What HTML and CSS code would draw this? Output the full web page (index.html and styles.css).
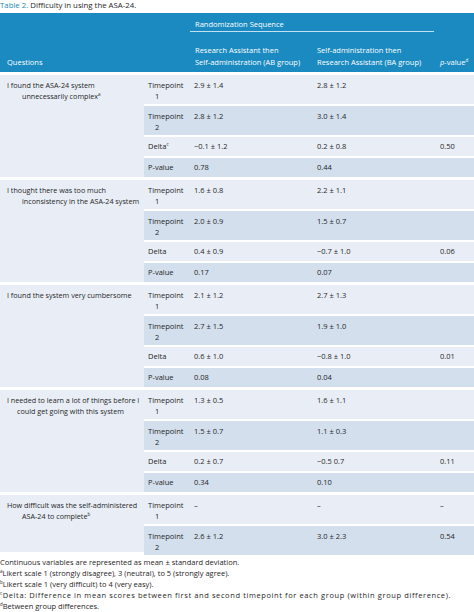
FILE: index.html
```html
<!DOCTYPE html>
<html>
<head>
<meta charset="utf-8">
<link rel="stylesheet" href="styles.css">
</head>
<body>
<p class="caption"><span class="tlabel">Table 2.</span> Difficulty in using the ASA-24.</p>
<table class="data">
  <colgroup>
    <col class="c-q"><col class="c-lab"><col class="c-ab"><col class="c-ba"><col class="c-p">
  </colgroup>
  <thead>
    <tr class="h1">
      <th rowspan="2" class="hq">Questions</th>
      <th rowspan="2" class="hlab"></th>
      <th colspan="2" class="hgroup"><div class="hgroup-line">Randomization Sequence</div></th>
      <th rowspan="2" class="hp"><i>p</i>-value<sup>d</sup></th>
    </tr>
    <tr class="h2">
      <th class="hab">Research Assistant then<br>Self-administration (AB group)</th>
      <th class="hba">Self-administration then<br>Research Assistant (BA group)</th>
    </tr>
  </thead>
  <tbody>
    <tr class="two light">
      <td rowspan="4" class="q"><span class="l1">I found the ASA-24 system</span><span class="l2">unnecessarily complex<sup>a</sup></span></td>
      <td class="lab">Timepoint<br><span class="ind">1</span></td><td>2.9 ± 1.4</td><td>2.8 ± 1.2</td><td></td>
    </tr>
    <tr class="two dark"><td class="lab">Timepoint<br><span class="ind">2</span></td><td>2.8 ± 1.2</td><td>3.0 ± 1.4</td><td></td></tr>
    <tr class="one light"><td class="lab">Delta<sup>c</sup></td><td>−0.1 ± 1.2</td><td>0.2 ± 0.8</td><td>0.50</td></tr>
    <tr class="one dark end"><td class="lab">P-value</td><td>0.78</td><td>0.44</td><td></td></tr>

    <tr class="two light">
      <td rowspan="4" class="q"><span class="l1">I thought there was too much</span><span class="l2">inconsistency in the ASA-24 system</span></td>
      <td class="lab">Timepoint<br><span class="ind">1</span></td><td>1.6 ± 0.8</td><td>2.2 ± 1.1</td><td></td>
    </tr>
    <tr class="two dark"><td class="lab">Timepoint<br><span class="ind">2</span></td><td>2.0 ± 0.9</td><td>1.5 ± 0.7</td><td></td></tr>
    <tr class="one light"><td class="lab">Delta</td><td>0.4 ± 0.9</td><td>−0.7 ± 1.0</td><td>0.06</td></tr>
    <tr class="one dark end"><td class="lab">P-value</td><td>0.17</td><td>0.07</td><td></td></tr>

    <tr class="two light">
      <td rowspan="4" class="q"><span class="l1">I found the system very cumbersome</span></td>
      <td class="lab">Timepoint<br><span class="ind">1</span></td><td>2.1 ± 1.2</td><td>2.7 ± 1.3</td><td></td>
    </tr>
    <tr class="two dark"><td class="lab">Timepoint<br><span class="ind">2</span></td><td>2.7 ± 1.5</td><td>1.9 ± 1.0</td><td></td></tr>
    <tr class="one light"><td class="lab">Delta</td><td>0.6 ± 1.0</td><td>−0.8 ± 1.0</td><td>0.01</td></tr>
    <tr class="one dark end"><td class="lab">P-value</td><td>0.08</td><td>0.04</td><td></td></tr>

    <tr class="two light">
      <td rowspan="4" class="q"><span class="l1">I needed to learn a lot of things before I</span><span class="l2 short">could get going with this system</span></td>
      <td class="lab">Timepoint<br><span class="ind">1</span></td><td>1.3 ± 0.5</td><td>1.6 ± 1.1</td><td></td>
    </tr>
    <tr class="two dark"><td class="lab">Timepoint<br><span class="ind">2</span></td><td>1.5 ± 0.7</td><td>1.1 ± 0.3</td><td></td></tr>
    <tr class="one light"><td class="lab">Delta</td><td>0.2 ± 0.7</td><td>−0.5 0.7</td><td>0.11</td></tr>
    <tr class="one dark end"><td class="lab">P-value</td><td>0.34</td><td>0.10</td><td></td></tr>

    <tr class="two light">
      <td rowspan="2" class="q"><span class="l1">How difficult was the self-administered</span><span class="l2">ASA-24 to complete<sup>b</sup></span></td>
      <td class="lab">Timepoint<br><span class="ind">1</span></td><td>–</td><td>–</td><td>–</td>
    </tr>
    <tr class="two dark last"><td class="lab">Timepoint<br><span class="ind">2</span></td><td>2.6 ± 1.2</td><td>3.0 ± 2.3</td><td>0.54</td></tr>
  </tbody>
</table>
<div class="notes">
  <p>Continuous variables are represented as mean ± standard deviation.</p>
  <p><sup>a</sup>Likert scale 1 (strongly disagree), 3 (neutral), to 5 (strongly agree).</p>
  <p><sup>b</sup>Likert scale 1 (very difficult) to 4 (very easy).</p>
  <p class="wide"><sup>c</sup>Delta: Difference in mean scores between first and second timepoint for each group (within group difference).</p>
  <p><sup>d</sup>Between group differences.</p>
</div>
</body>
</html>
```
FILE: styles.css
```css
html, body {
  margin: 0;
  padding: 0;
  background: #ffffff;
}
body {
  font-family: "Open Sans", "Liberation Sans", sans-serif;
  font-size: 7.5px;
  font-weight: 500;
  color: #262626;
  width: 474px;
}
.caption {
  margin: 0 0 2px 0;
  height: 11px;
  line-height: 11px;
  font-size: 7.8px;
  color: #262626;
}
.tlabel {
  color: #1a8ac0;
}
.data {
  width: 474px;
  border-collapse: separate;
  border-spacing: 0;
  table-layout: fixed;
}
.c-q { width: 144px; }
.c-lab { width: 46px; }
.c-ab { width: 123px; }
.c-ba { width: 121px; }
.c-p { width: 40px; }

thead th {
  background: #1a8ac0;
  color: #ffffff;
  font-weight: 500;
  text-align: left;
  line-height: 12px;
  padding: 0;
  white-space: nowrap;
}
.h1 th {
  height: 20px;
}
.hq, .hlab, .hp {
  vertical-align: bottom;
  padding-bottom: 4px !important;
  border-bottom: 3px solid #fff;
}
.hq {
  padding-left: 7px !important;
}
.hp {
  padding-left: 6px !important;
}
.hgroup {
  vertical-align: top;
}
.hgroup-line {
  padding: 5px 0 1px 5px;
  margin-right: -2px;
  border-bottom: 1px solid rgba(225, 240, 250, 0.85);
}
.h2 th {
  vertical-align: bottom;
  padding-top: 11px;
  padding-bottom: 4px;
  border-bottom: 3px solid #fff;
}
.hab { padding-left: 5px !important; }
.hba { padding-left: 4px !important; }

tbody td {
  padding: 0 0 0 4px;
  line-height: 11px;
  vertical-align: top;
  border-bottom: 2px solid #fff;
  white-space: nowrap;
  box-sizing: border-box;
}
tr.two td { height: 31px; padding-top: 5px; }
tr.one td { height: 21px; padding-top: 4px; }
tr.end td { height: 22px; border-bottom-width: 3px; }
tr.last td { border-bottom: 0; height: 29px; }
tr.light td { background: #e9eef6; }
tr.dark td { background: #d3dfed; }

td.q {
  background: #e9eef6 !important;
  padding: 5px 0 0 7px;
  border-bottom: 3px solid #fff;
  height: auto !important;
  font-size: 7.2px;
}
tr.last td.q { border-bottom: 0; }
.l1, .l2 {
  display: block;
}
.l2 {
  padding-left: 15px;
}
.l2.short {
  padding-left: 10px;
}
td.lab {
  padding-left: 4px;
}
.ind {
  padding-left: 7px;
}
tbody td:last-child { padding-left: 6px; }

sup {
  font-size: 4.5px;
  line-height: 0;
  vertical-align: 3px;
}
.notes {
  margin-top: 2px;
  font-size: 7.5px;
  color: #262626;
}
.notes p {
  margin: 0;
  line-height: 11px;
  white-space: nowrap;
}
.notes p.wide {
  letter-spacing: 0.6px;
}
```
